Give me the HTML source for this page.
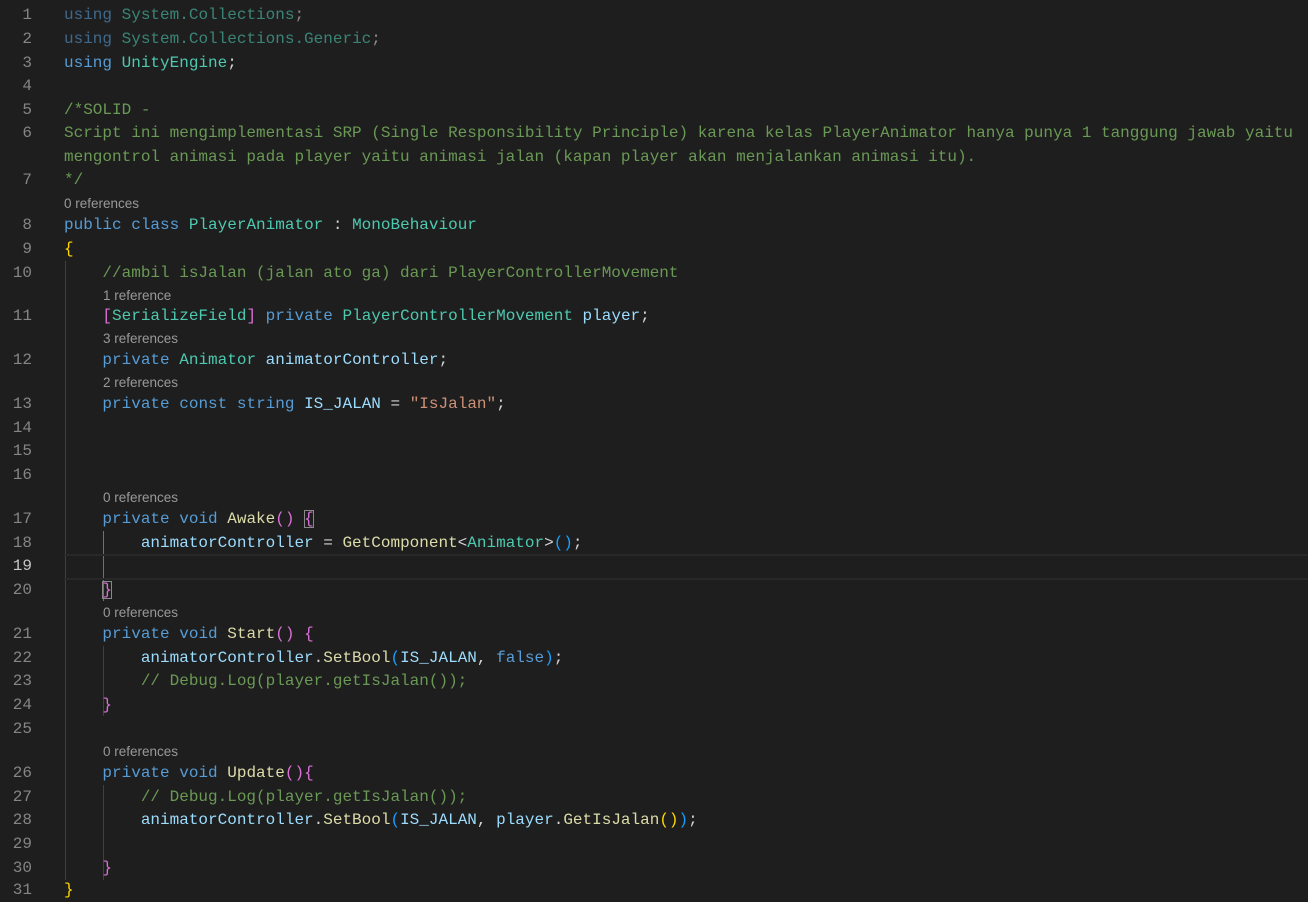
<!DOCTYPE html>
<html><head><meta charset="utf-8"><style>
body{margin:0;background:#1e1e1e;width:1308px;height:896px;overflow:hidden;position:relative;font-family:"Liberation Mono",monospace;font-size:16px;color:#d4d4d4}
.r{position:absolute;left:0;height:24px;line-height:24px;white-space:pre;width:1308px}
.n{position:absolute;left:0;width:32px;text-align:right;color:#858585}
.t{position:absolute;left:64px}
.cl{position:absolute;height:20px;line-height:20px;font-family:"Liberation Sans",sans-serif;font-size:13.5px;color:#999;white-space:pre}
.k{color:#569cd6}.c{color:#4ec9b0}.g{color:#6a9955}.s{color:#ce9178}.f{color:#dcdcaa}.v{color:#9cdcfe}
.y{color:#ffd700}.p{color:#da70d6}.b{color:#179fff}.dim{opacity:.6}
.ig{position:absolute;width:1px;background:#404040}
</style></head><body>
<div class="ig" style="left:65px;top:261px;height:619px"></div>
<div class="ig" style="left:103px;top:531px;height:70px;background:#707070"></div>
<div class="ig" style="left:103px;top:646px;height:70px"></div>
<div class="ig" style="left:103px;top:785px;height:95px"></div>
<div style="position:absolute;left:64px;top:554px;width:1244px;height:22px;border-top:2px solid #282828;border-bottom:2px solid #282828"></div>

<div class="r" style="top:3px"><span class="n">1</span><span class="t"><span class="dim"><span class="k">using</span> <span class="c">System.Collections</span>;</span></span></div>
<div class="r" style="top:27px"><span class="n">2</span><span class="t"><span class="dim"><span class="k">using</span> <span class="c">System.Collections.Generic</span>;</span></span></div>
<div class="r" style="top:51px"><span class="n">3</span><span class="t"><span class="k">using</span> <span class="c">UnityEngine</span>;</span></div>
<div class="r" style="top:74px"><span class="n">4</span></div>
<div class="r" style="top:98px"><span class="n">5</span><span class="t g">/*SOLID -</span></div>
<div class="r" style="top:121px"><span class="n">6</span><span class="t g">Script ini mengimplementasi SRP (Single Responsibility Principle) karena kelas PlayerAnimator hanya punya 1 tanggung jawab yaitu</span></div>
<div class="r" style="top:145px"><span class="t g">mengontrol animasi pada player yaitu animasi jalan (kapan player akan menjalankan animasi itu).</span></div>
<div class="r" style="top:168px"><span class="n">7</span><span class="t g">*/</span></div>
<div class="cl" style="left:64px;top:194px">0 references</div>
<div class="r" style="top:213px"><span class="n">8</span><span class="t"><span class="k">public</span> <span class="k">class</span> <span class="c">PlayerAnimator</span> : <span class="c">MonoBehaviour</span></span></div>
<div class="r" style="top:237px"><span class="n">9</span><span class="t y">{</span></div>
<div class="r" style="top:261px"><span class="n">10</span><span class="t g">    //ambil isJalan (jalan ato ga) dari PlayerControllerMovement</span></div>
<div class="cl" style="left:103px;top:286px">1 reference</div>
<div class="r" style="top:304px"><span class="n">11</span><span class="t">    <span class="p">[</span><span class="c">SerializeField</span><span class="p">]</span> <span class="k">private</span> <span class="c">PlayerControllerMovement</span> <span class="v">player</span>;</span></div>
<div class="cl" style="left:103px;top:329px">3 references</div>
<div class="r" style="top:348px"><span class="n">12</span><span class="t">    <span class="k">private</span> <span class="c">Animator</span> <span class="v">animatorController</span>;</span></div>
<div class="cl" style="left:103px;top:373px">2 references</div>
<div class="r" style="top:392px"><span class="n">13</span><span class="t">    <span class="k">private</span> <span class="k">const</span> <span class="k">string</span> <span class="v">IS_JALAN</span> = <span class="s">"IsJalan"</span>;</span></div>
<div class="r" style="top:416px"><span class="n">14</span></div>
<div class="r" style="top:439px"><span class="n">15</span></div>
<div class="r" style="top:463px"><span class="n">16</span></div>
<div class="cl" style="left:103px;top:488px">0 references</div>
<div class="r" style="top:507px"><span class="n">17</span><span class="t">    <span class="k">private</span> <span class="k">void</span> <span class="f">Awake</span><span class="p">()</span> <span class="p" style="outline:1px solid #888;outline-offset:-1px">{</span></span></div>
<div class="r" style="top:531px"><span class="n">18</span><span class="t">        <span class="v">animatorController</span> = <span class="f">GetComponent</span>&lt;<span class="c">Animator</span>&gt;<span class="b">()</span>;</span></div>
<div class="r" style="top:554px"><span class="n" style="color:#c6c6c6">19</span></div>
<div class="r" style="top:578px"><span class="n">20</span><span class="t">    <span class="p" style="outline:1px solid #888;outline-offset:-1px">}</span></span></div>
<div class="cl" style="left:103px;top:603px">0 references</div>
<div class="r" style="top:622px"><span class="n">21</span><span class="t">    <span class="k">private</span> <span class="k">void</span> <span class="f">Start</span><span class="p">()</span> <span class="p">{</span></span></div>
<div class="r" style="top:646px"><span class="n">22</span><span class="t">        <span class="v">animatorController</span>.<span class="f">SetBool</span><span class="b">(</span><span class="v">IS_JALAN</span>, <span class="k">false</span><span class="b">)</span>;</span></div>
<div class="r" style="top:669px"><span class="n">23</span><span class="t g">        // Debug.Log(player.getIsJalan());</span></div>
<div class="r" style="top:693px"><span class="n">24</span><span class="t">    <span class="p">}</span></span></div>
<div class="r" style="top:717px"><span class="n">25</span></div>
<div class="cl" style="left:103px;top:742px">0 references</div>
<div class="r" style="top:761px"><span class="n">26</span><span class="t">    <span class="k">private</span> <span class="k">void</span> <span class="f">Update</span><span class="p">(){</span></span></div>
<div class="r" style="top:785px"><span class="n">27</span><span class="t g">        // Debug.Log(player.getIsJalan());</span></div>
<div class="r" style="top:808px"><span class="n">28</span><span class="t">        <span class="v">animatorController</span>.<span class="f">SetBool</span><span class="b">(</span><span class="v">IS_JALAN</span>, <span class="v">player</span>.<span class="f">GetIsJalan</span><span class="y">()</span><span class="b">)</span>;</span></div>
<div class="r" style="top:832px"><span class="n">29</span></div>
<div class="r" style="top:856px"><span class="n">30</span><span class="t">    <span class="p">}</span></span></div>
<div class="r" style="top:878px"><span class="n">31</span><span class="t y">}</span></div>
</body></html>
